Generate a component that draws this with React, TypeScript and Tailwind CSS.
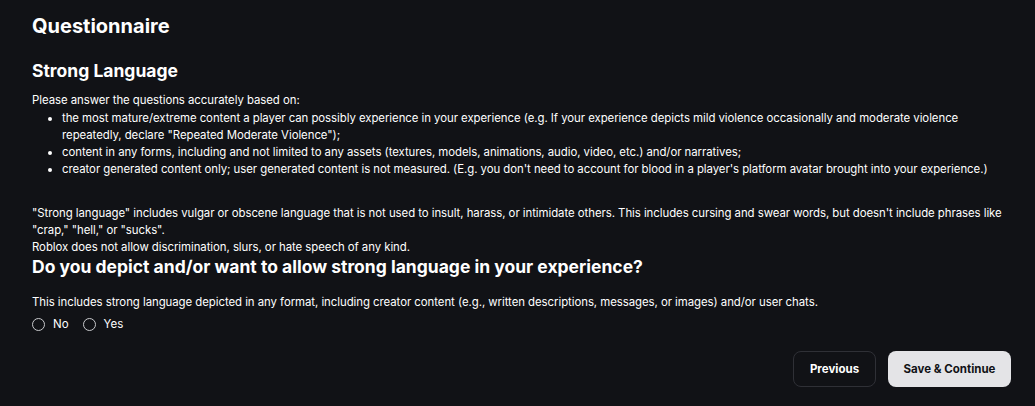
import React from "react";

const bullets = [
  'the most mature/extreme content a player can possibly experience in your experience (e.g. If your experience depicts mild violence occasionally and moderate violence repeatedly, declare "Repeated Moderate Violence");',
  "content in any forms, including and not limited to any assets (textures, models, animations, audio, video, etc.) and/or narratives;",
  "creator generated content only; user generated content is not measured. (E.g. you don't need to account for blood in a player's platform avatar brought into your experience.)",
];

const Radio = ({ label }: { label: string }) => (
  <label className="flex items-center gap-2">
    <span className="w-[13px] h-[13px] rounded-full border border-[#c8c9cc]" />
    <span>{label}</span>
  </label>
);

export default function App() {
  return (
    <div className="w-[1035px] h-[406px] bg-[#111216] text-white font-['Inter',sans-serif] px-8 pt-[14px] overflow-hidden">
      <h1 className="text-[20px] font-bold leading-[24px]">Questionnaire</h1>
      <h2 className="text-[17.5px] font-bold leading-[22px] mt-[22px]">Strong Language</h2>
      <div className="text-[11.4px] leading-[17px] mt-[10px] tracking-[-0.05px]">
        <p>Please answer the questions accurately based on:</p>
        <ul className="list-disc pl-[30px] mt-[1px]">
          {bullets.map((b, i) => (
            <li key={i}>{b}</li>
          ))}
        </ul>
      </div>
      <div className="text-[11.4px] leading-[17px] mt-[27px] tracking-[-0.05px]">
        <p>
          "Strong language" includes vulgar or obscene language that is not used to insult, harass, or intimidate others. This includes cursing and swear words, but doesn't include phrases like "crap," "hell," or "sucks".
        </p>
        <p>Roblox does not allow discrimination, slurs, or hate speech of any kind.</p>
      </div>
      <h3 className="text-[17.5px] font-bold leading-[22px]">Do you depict and/or want to allow strong language in your experience?</h3>
      <p className="text-[11.4px] leading-[17px] mt-[16px] tracking-[-0.05px]">
        This includes strong language depicted in any format, including creator content (e.g., written descriptions, messages, or images) and/or user chats.
      </p>
      <div className="flex gap-[14px] text-[11.5px] mt-[5px]">
        <Radio label="No" />
        <Radio label="Yes" />
      </div>
      <div className="flex justify-end gap-3 mt-[18px] mr-[-8px]">
        <button className="h-[36px] w-[83px] rounded-lg border border-[#2f3036] text-[11.5px] font-bold">Previous</button>
        <button className="h-[36px] w-[123px] rounded-lg bg-[#e4e4e7] text-[#111216] text-[11.5px] font-bold">Save &amp; Continue</button>
      </div>
    </div>
  );
}
